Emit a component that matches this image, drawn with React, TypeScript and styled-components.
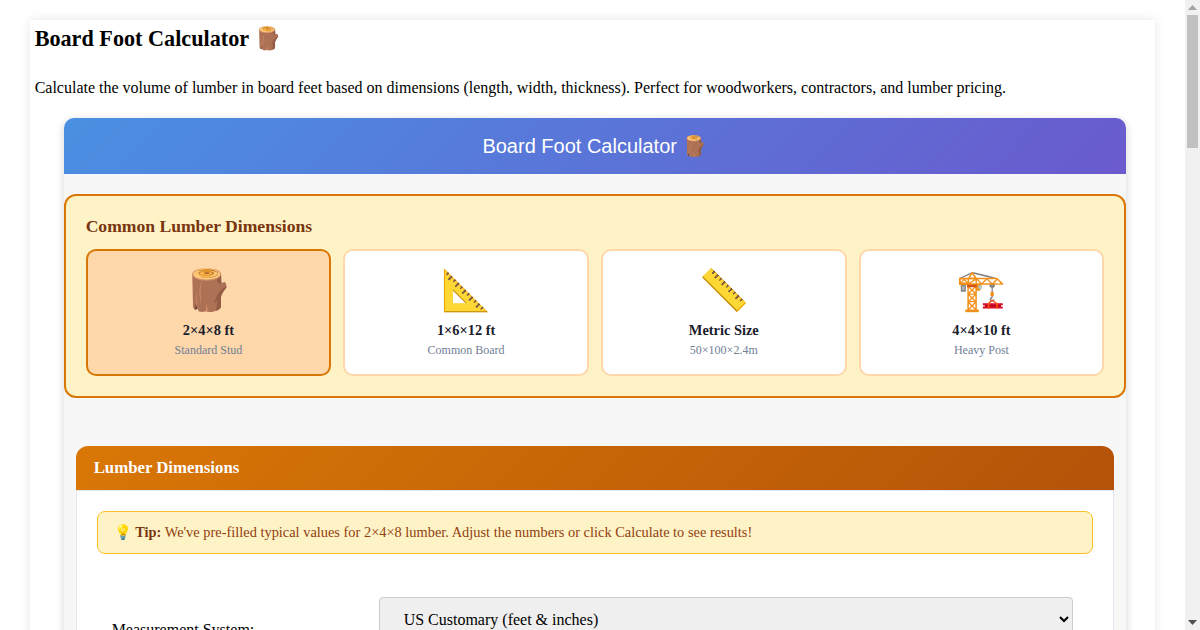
import React from "react";
import styled, { createGlobalStyle } from "styled-components";

const Global = createGlobalStyle`
  html, body { margin: 0; padding: 0; background: #fff; }
  body { font-family: "Liberation Serif", "Times New Roman", serif; color: #000; }
`;

const Page = styled.div`
  box-sizing: border-box;
  width: 1125.75px;
  min-height: 2822px;
  margin: 20px 0 0 29.625px;
  padding: 1px 5px 0;
  background: #fff;
  box-shadow: 0 0 10px rgba(0, 0, 0, 0.1);
`;

const Scrollbar = styled.div`
  position: fixed;
  top: 0;
  right: 0;
  bottom: 0;
  width: 15px;
  display: flex;
  flex-direction: column;
  background: #f1f1f1;
`;

const ScrollButton = styled.div`
  flex: 0 0 15px;
  display: flex;
  align-items: center;
  justify-content: center;
`;

const ScrollTrack = styled.div`
  flex: 1;
  padding: 0 2px;
`;

const ScrollThumb = styled.div`
  height: 133px;
  background: #c1c1c1;
`;

const Heading = styled.h1`
  margin: 3px 0 0;
  font-size: 22.2px;
  line-height: 30px;
  font-weight: 700;
`;

const Intro = styled.p`
  margin: 25px 0 0;
  font-size: 16px;
  line-height: 18px;
`;

const Calculator = styled.div`
  width: 1062.67px;
  margin: 21px 0 0 29px;
  background: #f7f7f7;
  border-radius: 10px;
  box-shadow: 0 2px 8px rgba(0, 0, 0, 0.18);
`;

const Banner = styled.div`
  height: 56px;
  display: flex;
  align-items: center;
  justify-content: center;
  border-radius: 10px 10px 0 0;
  background: linear-gradient(135deg, #4a90e2, #6a5acd);
  color: #fff;
  font-family: "Liberation Sans", Arial, sans-serif;
  font-size: 20px;
`;

const Presets = styled.section`
  box-sizing: border-box;
  height: 204px;
  margin-top: 20px;
  padding: 20px;
  background: #fef3c7;
  border: 2px solid #d97706;
  border-radius: 12px;
`;

const PresetsTitle = styled.h3`
  margin: 0 0 12px;
  font-size: 17.6px;
  line-height: 21px;
  font-weight: 700;
  color: #78350f;
`;

const PresetGrid = styled.div`
  display: grid;
  grid-template-columns: repeat(4, 1fr);
  gap: 12px;
`;

const PresetCard = styled.button<{ $active?: boolean }>`
  box-sizing: border-box;
  height: 127px;
  padding: 16px 0 0;
  display: flex;
  flex-direction: column;
  align-items: center;
  font-family: inherit;
  background: ${(p) => (p.$active ? "#fed7aa" : "#fff")};
  border: 2px solid ${(p) => (p.$active ? "#d97706" : "#fed7aa")};
  border-radius: 10px;
`;

const PresetIcon = styled.span`
  font-size: 40px;
  line-height: 47px;
  margin-bottom: 7px;
`;

const PresetName = styled.span`
  font-size: 14.4px;
  line-height: 18px;
  font-weight: 700;
  color: #1a202c;
`;

const PresetNote = styled.span`
  margin-top: 4px;
  font-size: 12px;
  line-height: 14px;
  color: #718096;
`;

const Section = styled.section`
  margin: 48px 12px 0;
`;

const SectionHead = styled.div`
  box-sizing: border-box;
  height: 44px;
  padding: 0 18px;
  display: flex;
  align-items: center;
  border-radius: 12px 12px 0 0;
  background: linear-gradient(135deg, #d97706, #b45309);
  color: #fff;
  font-size: 16.8px;
  font-weight: 700;
`;

const SectionBody = styled.div`
  padding: 20px 20px 40px;
  background: #fff;
  border: 1px solid #e2e8f0;
`;

const Tip = styled.div`
  box-sizing: border-box;
  height: 43px;
  padding: 0 16px;
  display: flex;
  align-items: center;
  white-space: pre;
  background: #fef3c7;
  border: 1px solid #fbbf24;
  border-radius: 8px;
  color: #92400e;
  font-size: 14.4px;

  strong {
    color: #78350f;
  }
`;

const FormRow = styled.div`
  display: flex;
  align-items: flex-end;
  margin-top: 43px;
  padding-left: 15px;
`;

const FieldLabel = styled.label`
  flex: 0 0 267px;
  padding-bottom: 2px;
  font-size: 16px;
  line-height: 18px;
`;

const Select = styled.select`
  box-sizing: border-box;
  width: 694px;
  height: 44px;
  padding: 10px 20px;
  font-family: inherit;
  font-size: 16px;
  color: #000;
  background: #efefef;
  border: 1px solid #ccc;
  border-radius: 4px;
`;

const presets = [
  { icon: "🪵", name: "2×4×8 ft", note: "Standard Stud", active: true },
  { icon: "📐", name: "1×6×12 ft", note: "Common Board" },
  { icon: "📏", name: "Metric Size", note: "50×100×2.4m" },
  { icon: "🏗️", name: "4×4×10 ft", note: "Heavy Post" },
];

export default function App() {
  return (
    <>
      <Global />
      <Page>
        <Heading>Board Foot Calculator 🪵</Heading>
        <Intro>
          Calculate the volume of lumber in board feet based on dimensions (length, width, thickness). Perfect for woodworkers, contractors, and lumber pricing.
        </Intro>
        <Calculator>
          <Banner>Board Foot Calculator 🪵</Banner>
          <Presets>
            <PresetsTitle>Common Lumber Dimensions</PresetsTitle>
            <PresetGrid>
              {presets.map((p) => (
                <PresetCard key={p.name} $active={p.active}>
                  <PresetIcon>{p.icon}</PresetIcon>
                  <PresetName>{p.name}</PresetName>
                  <PresetNote>{p.note}</PresetNote>
                </PresetCard>
              ))}
            </PresetGrid>
          </Presets>
          <Section>
            <SectionHead>Lumber Dimensions</SectionHead>
            <SectionBody>
              <Tip>
                <span>💡 <strong>Tip:</strong> We've pre-filled typical values for 2×4×8 lumber. Adjust the numbers or click Calculate to see results!</span>
              </Tip>
              <FormRow>
                <FieldLabel>Measurement System:</FieldLabel>
                <Select defaultValue="us">
                  <option value="us">US Customary (feet &amp; inches)</option>
                  <option value="metric">Metric (meters &amp; millimeters)</option>
                </Select>
              </FormRow>
            </SectionBody>
          </Section>
        </Calculator>
      </Page>
      <Scrollbar>
        <ScrollButton>
          <svg width="9" height="5" viewBox="0 0 9 5"><path d="M4.5 0L9 5H0z" fill="#a3a3a3" /></svg>
        </ScrollButton>
        <ScrollTrack>
          <ScrollThumb />
        </ScrollTrack>
        <ScrollButton>
          <svg width="9" height="5" viewBox="0 0 9 5"><path d="M0 0h9L4.5 5z" fill="#505050" /></svg>
        </ScrollButton>
      </Scrollbar>
    </>
  );
}
